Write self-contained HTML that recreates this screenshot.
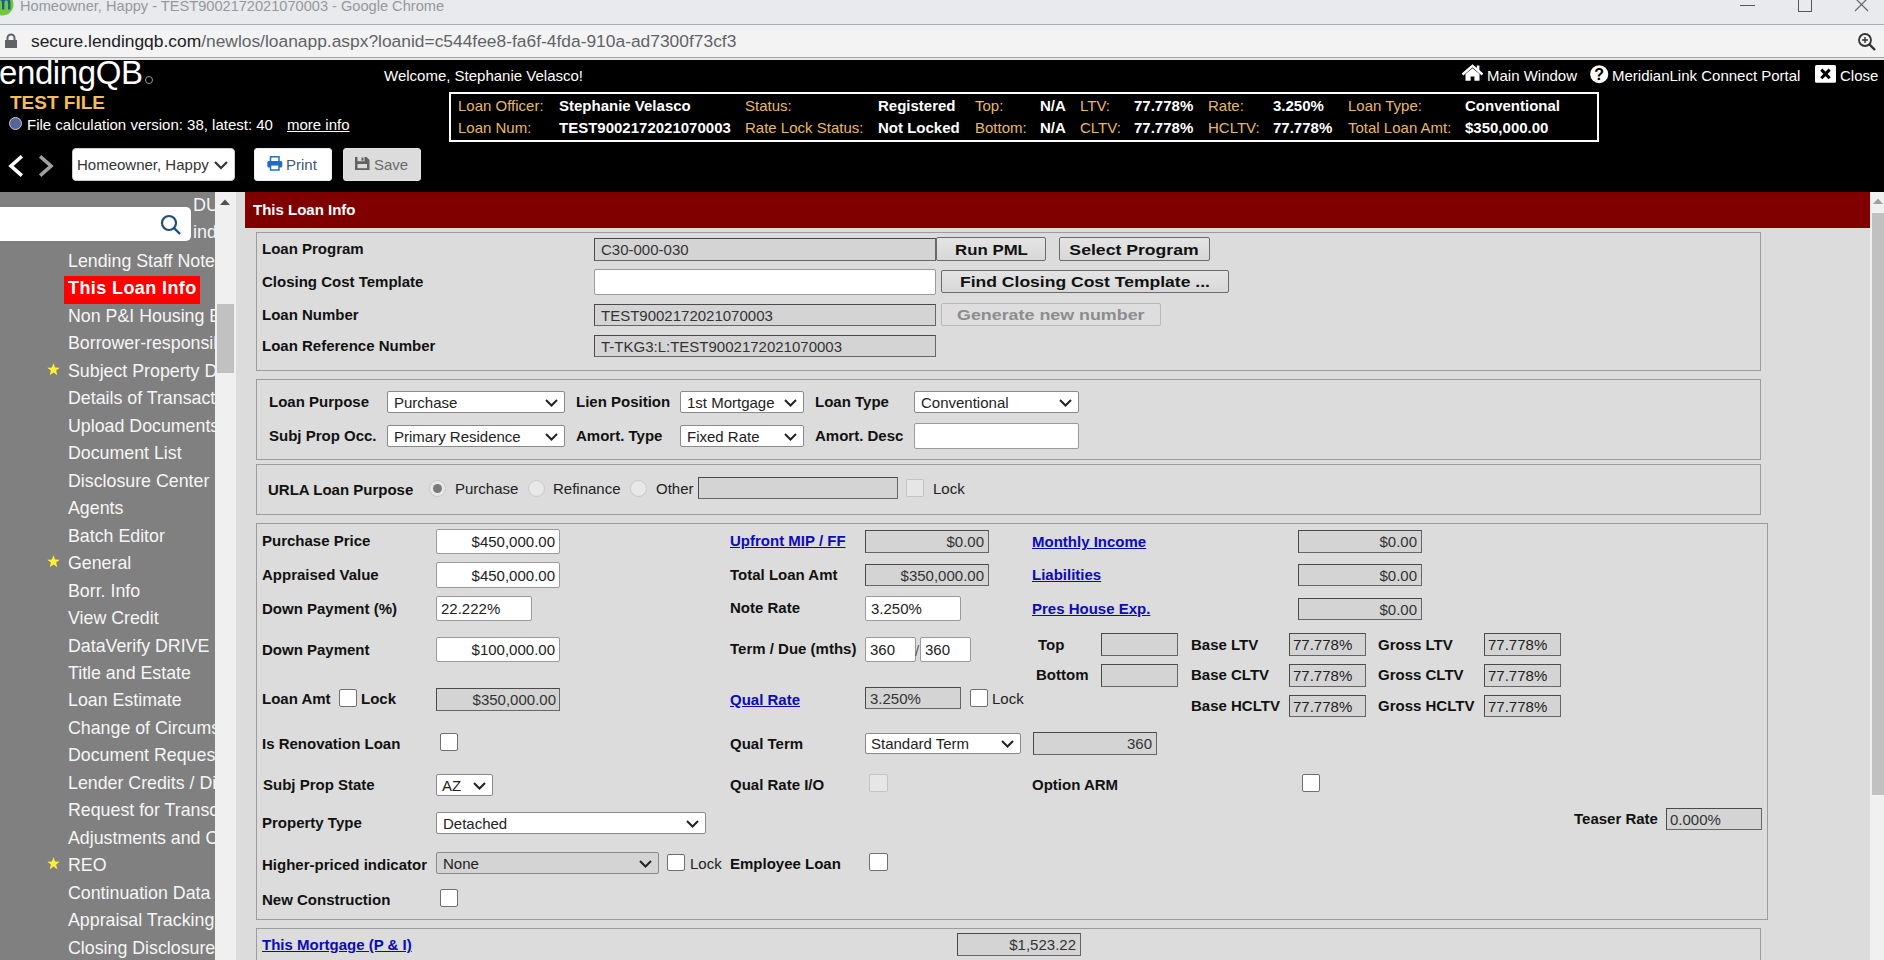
<!DOCTYPE html><html><head><meta charset="utf-8"><style>html,body{margin:0;padding:0;}body{width:1884px;height:960px;overflow:hidden;position:relative;background:#dcdcdc;font-family:"Liberation Sans", sans-serif;}.t{position:absolute;white-space:nowrap;}.b{position:absolute;box-sizing:border-box;}</style></head><body>
<div class="b" style="left:0px;top:0px;width:1884px;height:24px;background:#e8eaed;"></div>
<div class="b" style="left:0px;top:24px;width:1884px;height:1px;background:#a9acaf;"></div>
<div class="b" style="left:0px;top:25px;width:1884px;height:6px;background:#eef1f3;"></div>
<div class="b" style="left:0px;top:31px;width:1884px;height:26px;background:#f3f3f3;"></div>
<div class="b" style="left:0px;top:57px;width:1884px;height:1px;background:#a4a4a4;"></div>
<div class="b" style="left:0px;top:58px;width:1884px;height:2px;background:#e6e6e6;"></div>
<svg class="b" style="left:0;top:0" width="16" height="18"><circle cx="2.5" cy="4.5" r="11" fill="#72c83c"/><path d="M-2.5 10 V3 Q-2.5 -1 0.5 -1 Q3.2 -1 3.2 3 V9.5 M3.2 3 Q3.2 -1 6.3 -1 Q9.3 -1 9.3 3 V9.5" fill="none" stroke="#1d5c9a" stroke-width="2.4"/></svg>
<div class="t" style="left:20px;top:-1.26px;font-size:14.6px;line-height:14.6px;color:#96989b;">Homeowner, Happy - TEST9002172021070003 - Google Chrome</div>
<div class="b" style="left:1740px;top:5px;width:15px;height:1px;background:#555;"></div>
<div class="b" style="left:1798px;top:-2px;width:14px;height:14px;border:1px solid #555;"></div>
<svg class="b" style="left:1853px;top:-3px" width="18" height="17"><path d="M2 1 L15 14 M15 1 L2 14" stroke="#666" stroke-width="1.2"/></svg>
<svg class="b" style="left:4px;top:33px" width="14" height="16"><path d="M3.5 7 V5 a3.5 3.5 0 0 1 7 0 V7" fill="none" stroke="#5f6368" stroke-width="2"/><rect x="1" y="7" width="12" height="8" fill="#5f6368"/></svg>
<div class="t" style="left:31px;top:33.47px;font-size:17.4px;line-height:17.4px;color:#5f6368;"><span style="color:#202124">secure.lendingqb.com</span>/newlos/loanapp.aspx?loanid=c544fee8-fa6f-4fda-910a-ad7300f73cf3</div>
<svg class="b" style="left:1856px;top:31px" width="22" height="22"><circle cx="9" cy="9" r="6" fill="none" stroke="#333" stroke-width="1.8"/><path d="M9 6 V12 M6 9 H12" stroke="#333" stroke-width="1.4"/><path d="M13.5 13.5 L19 19" stroke="#333" stroke-width="2.4"/></svg>
<div class="b" style="left:0px;top:60px;width:1884px;height:132px;background:#000;"></div>
<div class="t" style="left:-1px;top:56.07px;font-size:33px;line-height:33px;color:#fff;letter-spacing:-0.4px;">endingQB</div>
<div class="b" style="left:145px;top:76px;width:8px;height:8px;border-radius:50%;border:1px solid #999;"></div>
<div class="t" style="left:10px;top:92.92px;font-size:19px;line-height:19px;color:#f3bd5c;font-weight:bold;">TEST FILE</div>
<div class="b" style="left:9px;top:117px;width:13px;height:13px;border-radius:50%;background:#56659a;border:1px solid #ccc;"></div>
<div class="t" style="left:27px;top:117.30px;font-size:15px;line-height:15px;color:#fff;">File calculation version: 38, latest: 40</div>
<div class="t" style="left:287px;top:117.30px;font-size:15px;line-height:15px;color:#fff;text-decoration:underline;">more info</div>
<div class="t" style="left:384px;top:68.30px;font-size:15px;line-height:15px;color:#fff;">Welcome, Stephanie Velasco!</div>
<svg class="b" style="left:1461px;top:64px" width="24" height="18"><path d="M1.5 10.5 L11.5 1.8 L21.5 10.5" fill="none" stroke="#fff" stroke-width="2.4"/><path d="M4.5 10 V16.8 H9.6 V12.6 H13.4 V16.8 H18.5 V10 L11.5 4.2 Z" fill="#fff"/><rect x="15.8" y="1.5" width="2.6" height="5.5" fill="#fff"/></svg>
<div class="t" style="left:1487px;top:68.30px;font-size:15px;line-height:15px;color:#fff;">Main Window</div>
<svg class="b" style="left:1590px;top:64.5px" width="19" height="19"><circle cx="9.2" cy="9.2" r="9" fill="#fff"/><text x="9.2" y="15" text-anchor="middle" font-family="Liberation Sans" font-weight="bold" font-size="16" fill="#000">?</text></svg>
<div class="t" style="left:1612px;top:68.30px;font-size:15px;line-height:15px;color:#fff;">MeridianLink Connect Portal</div>
<svg class="b" style="left:1815px;top:65px" width="22" height="18"><rect x="0" y="0" width="21" height="17.8" rx="1.5" fill="#fff"/><path d="M6.3 4.6 L14.7 13.2 M14.7 4.6 L6.3 13.2" stroke="#000" stroke-width="3"/></svg>
<div class="t" style="left:1840px;top:68.30px;font-size:15px;line-height:15px;color:#fff;">Close</div>
<div class="b" style="left:449px;top:92px;width:1150px;height:50px;border:2px solid #fff;"></div>
<div class="t" style="left:458px;top:98.30px;font-size:15px;line-height:15px;color:#e6b96a;">Loan Officer:</div>
<div class="t" style="left:458px;top:120.30px;font-size:15px;line-height:15px;color:#e6b96a;">Loan Num:</div>
<div class="t" style="left:745px;top:98.30px;font-size:15px;line-height:15px;color:#e6b96a;">Status:</div>
<div class="t" style="left:745px;top:120.30px;font-size:15px;line-height:15px;color:#e6b96a;">Rate Lock Status:</div>
<div class="t" style="left:975px;top:98.30px;font-size:15px;line-height:15px;color:#e6b96a;">Top:</div>
<div class="t" style="left:975px;top:120.30px;font-size:15px;line-height:15px;color:#e6b96a;">Bottom:</div>
<div class="t" style="left:1080px;top:98.30px;font-size:15px;line-height:15px;color:#e6b96a;">LTV:</div>
<div class="t" style="left:1080px;top:120.30px;font-size:15px;line-height:15px;color:#e6b96a;">CLTV:</div>
<div class="t" style="left:1208px;top:98.30px;font-size:15px;line-height:15px;color:#e6b96a;">Rate:</div>
<div class="t" style="left:1208px;top:120.30px;font-size:15px;line-height:15px;color:#e6b96a;">HCLTV:</div>
<div class="t" style="left:1348px;top:98.30px;font-size:15px;line-height:15px;color:#e6b96a;">Loan Type:</div>
<div class="t" style="left:1348px;top:120.30px;font-size:15px;line-height:15px;color:#e6b96a;">Total Loan Amt:</div>
<div class="t" style="left:559px;top:98.30px;font-size:15px;line-height:15px;color:#fff;font-weight:bold;">Stephanie Velasco</div>
<div class="t" style="left:559px;top:120.30px;font-size:15px;line-height:15px;color:#fff;font-weight:bold;">TEST9002172021070003</div>
<div class="t" style="left:878px;top:98.30px;font-size:15px;line-height:15px;color:#fff;font-weight:bold;">Registered</div>
<div class="t" style="left:878px;top:120.30px;font-size:15px;line-height:15px;color:#fff;font-weight:bold;">Not Locked</div>
<div class="t" style="left:1040px;top:98.30px;font-size:15px;line-height:15px;color:#fff;font-weight:bold;">N/A</div>
<div class="t" style="left:1040px;top:120.30px;font-size:15px;line-height:15px;color:#fff;font-weight:bold;">N/A</div>
<div class="t" style="left:1134px;top:98.30px;font-size:15px;line-height:15px;color:#fff;font-weight:bold;">77.778%</div>
<div class="t" style="left:1134px;top:120.30px;font-size:15px;line-height:15px;color:#fff;font-weight:bold;">77.778%</div>
<div class="t" style="left:1273px;top:98.30px;font-size:15px;line-height:15px;color:#fff;font-weight:bold;">3.250%</div>
<div class="t" style="left:1273px;top:120.30px;font-size:15px;line-height:15px;color:#fff;font-weight:bold;">77.778%</div>
<div class="t" style="left:1465px;top:98.30px;font-size:15px;line-height:15px;color:#fff;font-weight:bold;">Conventional</div>
<div class="t" style="left:1465px;top:120.30px;font-size:15px;line-height:15px;color:#fff;font-weight:bold;">$350,000.00</div>
<svg class="b" style="left:0px;top:150px" width="30" height="30"><path d="M20.5 7.5 L11 16 L20.5 24.5" fill="none" stroke="#fff" stroke-width="3.6" stroke-linecap="square"/></svg>
<svg class="b" style="left:30px;top:150px" width="30" height="30"><path d="M11.5 7.5 L21 16 L11.5 24.5" fill="none" stroke="#a0a0a0" stroke-width="3.6" stroke-linecap="square"/></svg>
<div class="b" style="left:72px;top:148px;width:163px;height:33px;background:#fff;border-radius:4px;border:1px solid #ccc;"></div>
<div class="t" style="left:77px;top:157.30px;font-size:15px;line-height:15px;color:#333;">Homeowner, Happy</div>
<svg class="b" style="left:213.0px;top:159.5px" width="16" height="10.0"><path d="M2 2 L8.0 8.0 L14 2" fill="none" stroke="#333" stroke-width="2.2"/></svg>
<div class="b" style="left:254px;top:148px;width:78px;height:33px;background:#fff;border-radius:3px;border:1px solid #e6eef8;"></div>
<svg class="b" style="left:267px;top:156px" width="16" height="15"><rect x="3.5" y="0.8" width="8.5" height="5" fill="#fff" stroke="#1f6fc0" stroke-width="1.5"/><rect x="0.3" y="5" width="15" height="6.5" rx="1.5" fill="#1f6fc0"/><rect x="3.5" y="8.8" width="8.5" height="5.2" fill="#fff" stroke="#1f6fc0" stroke-width="1.5"/></svg>
<div class="t" style="left:286px;top:157.30px;font-size:15px;line-height:15px;color:#3f5877;">Print</div>
<div class="b" style="left:343px;top:148px;width:78px;height:33px;background:#dcdcdc;border-radius:3px;border:1px solid #e2e2e2;"></div>
<svg class="b" style="left:355px;top:157px" width="15" height="13"><path d="M0 0 H11.5 L14.5 3 V13 H0 Z" fill="#626262"/><rect x="2.5" y="0" width="7" height="4.2" fill="#dcdcdc"/><rect x="6.5" y="0.6" width="2" height="3" fill="#626262"/><rect x="2.5" y="7" width="9.5" height="4.2" fill="#dcdcdc"/></svg>
<div class="t" style="left:374px;top:157.30px;font-size:15px;line-height:15px;color:#6a6a6a;">Save</div>
<div class="b" style="left:0px;top:192px;width:215px;height:768px;background:#808080;overflow:hidden;"></div>
<div class="b" style="left:-10px;top:207px;width:201px;height:34px;background:#fff;border-radius:5px;"></div>
<svg class="b" style="left:159px;top:213px" width="24" height="24"><circle cx="10" cy="10" r="7" fill="none" stroke="#1e4f7a" stroke-width="2.2"/><path d="M15 15 L21 21" stroke="#1e4f7a" stroke-width="2.4"/></svg>
<div class="b" style="left:193px;top:192px;width:22px;height:50px;overflow:hidden;"><div class="t" style="left:0;top:4.26px;font-size:18px;line-height:18px;color:#f4f4f4">DU</div><div class="t" style="left:0;top:30.76px;font-size:18px;line-height:18px;color:#f4f4f4">ind</div></div>
<div class="b" style="left:0;top:192px;width:215px;height:768px;overflow:hidden;">
<div class="t" style="left:68px;top:60.93px;font-size:17.8px;line-height:17.8px;color:#f6f6f6;">Lending Staff Notes</div>
<div class="b" style="left:64px;top:84px;width:136px;height:28px;background:#f00;"></div>
<div class="t" style="left:68px;top:87.16px;font-size:18px;line-height:18px;color:#fff;font-weight:bold;letter-spacing:0.4px;">This Loan Info</div>
<div class="t" style="left:68px;top:115.87px;font-size:17.8px;line-height:17.8px;color:#f6f6f6;">Non P&amp;I Housing Expenses</div>
<div class="t" style="left:68px;top:143.34px;font-size:17.8px;line-height:17.8px;color:#f6f6f6;">Borrower-responsible</div>
<div class="t" style="left:68px;top:170.81px;font-size:17.8px;line-height:17.8px;color:#f6f6f6;">Subject Property Details</div>
<svg class="b" style="left:46.5px;top:170.88px" width="13" height="13"><path d="M6.5 0.3 L8.1 4.6 L12.7 4.8 L9.1 7.6 L10.3 12.2 L6.5 9.6 L2.7 12.2 L3.9 7.6 L0.3 4.8 L4.9 4.6 Z" fill="#ffef3a"/></svg>
<div class="t" style="left:68px;top:198.28px;font-size:17.8px;line-height:17.8px;color:#f6f6f6;">Details of Transaction</div>
<div class="t" style="left:68px;top:225.75px;font-size:17.8px;line-height:17.8px;color:#f6f6f6;">Upload Documents</div>
<div class="t" style="left:68px;top:253.22px;font-size:17.8px;line-height:17.8px;color:#f6f6f6;">Document List</div>
<div class="t" style="left:68px;top:280.69px;font-size:17.8px;line-height:17.8px;color:#f6f6f6;">Disclosure Center</div>
<div class="t" style="left:68px;top:308.16px;font-size:17.8px;line-height:17.8px;color:#f6f6f6;">Agents</div>
<div class="t" style="left:68px;top:335.63px;font-size:17.8px;line-height:17.8px;color:#f6f6f6;">Batch Editor</div>
<div class="t" style="left:68px;top:363.10px;font-size:17.8px;line-height:17.8px;color:#f6f6f6;">General</div>
<svg class="b" style="left:46.5px;top:363.16999999999996px" width="13" height="13"><path d="M6.5 0.3 L8.1 4.6 L12.7 4.8 L9.1 7.6 L10.3 12.2 L6.5 9.6 L2.7 12.2 L3.9 7.6 L0.3 4.8 L4.9 4.6 Z" fill="#ffef3a"/></svg>
<div class="t" style="left:68px;top:390.57px;font-size:17.8px;line-height:17.8px;color:#f6f6f6;">Borr. Info</div>
<div class="t" style="left:68px;top:418.04px;font-size:17.8px;line-height:17.8px;color:#f6f6f6;">View Credit</div>
<div class="t" style="left:68px;top:445.51px;font-size:17.8px;line-height:17.8px;color:#f6f6f6;">DataVerify DRIVE</div>
<div class="t" style="left:68px;top:472.98px;font-size:17.8px;line-height:17.8px;color:#f6f6f6;">Title and Estate</div>
<div class="t" style="left:68px;top:500.45px;font-size:17.8px;line-height:17.8px;color:#f6f6f6;">Loan Estimate</div>
<div class="t" style="left:68px;top:527.92px;font-size:17.8px;line-height:17.8px;color:#f6f6f6;">Change of Circumstances</div>
<div class="t" style="left:68px;top:555.39px;font-size:17.8px;line-height:17.8px;color:#f6f6f6;">Document Request</div>
<div class="t" style="left:68px;top:582.86px;font-size:17.8px;line-height:17.8px;color:#f6f6f6;">Lender Credits / Discount</div>
<div class="t" style="left:68px;top:610.33px;font-size:17.8px;line-height:17.8px;color:#f6f6f6;">Request for Transcript</div>
<div class="t" style="left:68px;top:637.80px;font-size:17.8px;line-height:17.8px;color:#f6f6f6;">Adjustments and Other Credits</div>
<div class="t" style="left:68px;top:665.27px;font-size:17.8px;line-height:17.8px;color:#f6f6f6;">REO</div>
<svg class="b" style="left:46.5px;top:665.3399999999999px" width="13" height="13"><path d="M6.5 0.3 L8.1 4.6 L12.7 4.8 L9.1 7.6 L10.3 12.2 L6.5 9.6 L2.7 12.2 L3.9 7.6 L0.3 4.8 L4.9 4.6 Z" fill="#ffef3a"/></svg>
<div class="t" style="left:68px;top:692.74px;font-size:17.8px;line-height:17.8px;color:#f6f6f6;">Continuation Data</div>
<div class="t" style="left:68px;top:720.21px;font-size:17.8px;line-height:17.8px;color:#f6f6f6;">Appraisal Tracking</div>
<div class="t" style="left:68px;top:747.68px;font-size:17.8px;line-height:17.8px;color:#f6f6f6;">Closing Disclosure</div>
</div>
<div class="b" style="left:215px;top:192px;width:21px;height:768px;background:#f0f0f0;"></div>
<svg class="b" style="left:219px;top:198px" width="12" height="8"><path d="M1 7 L6 1.5 L11 7 Z" fill="#505050"/></svg>
<div class="b" style="left:217px;top:304px;width:17px;height:69px;background:#c1c1c1;"></div>
<div class="b" style="left:245px;top:192px;width:1625px;height:36px;background:#800000;"></div>
<div class="t" style="left:253px;top:202.30px;font-size:15px;line-height:15px;color:#fff;font-weight:bold;">This Loan Info</div>
<div class="b" style="left:1870px;top:192px;width:14px;height:768px;background:#f0f0f0;"></div>
<svg class="b" style="left:1872px;top:197px" width="12" height="8"><path d="M1 7 L6 1.5 L11 7 Z" fill="#a0a0a0"/></svg>
<div class="b" style="left:1872px;top:213px;width:12px;height:582px;background:#c1c1c1;"></div>
<div class="b" style="left:256px;top:232px;width:1505px;height:139px;border:1px solid #9c9c9c;"></div>
<div class="b" style="left:256px;top:379px;width:1505px;height:81px;border:1px solid #9c9c9c;"></div>
<div class="b" style="left:256px;top:464px;width:1505px;height:51px;border:1px solid #9c9c9c;"></div>
<div class="b" style="left:256px;top:523px;width:1512px;height:397px;border:1px solid #9c9c9c;"></div>
<div class="b" style="left:256px;top:928px;width:1505px;height:72px;border:1px solid #9c9c9c;"></div>
<div class="t" style="left:262px;top:241.30px;font-size:15px;line-height:15px;color:#111;font-weight:bold;">Loan Program</div>
<div class="t" style="left:262px;top:274.30px;font-size:15px;line-height:15px;color:#111;font-weight:bold;">Closing Cost Template</div>
<div class="t" style="left:262px;top:307.30px;font-size:15px;line-height:15px;color:#111;font-weight:bold;">Loan Number</div>
<div class="t" style="left:262px;top:338.30px;font-size:15px;line-height:15px;color:#111;font-weight:bold;">Loan Reference Number</div>
<div class="b" style="left:594px;top:238px;width:342px;height:23px;background:#d4d4d4;border:1px solid #666;border-top-color:#4a4a4a;border-left-color:#4a4a4a;"></div>
<div class="t" style="left:601px;top:242.20px;font-size:15px;line-height:15px;color:#333;">C30-000-030</div>
<div class="b" style="left:594px;top:269px;width:342px;height:26px;background:#fff;border:1px solid #9a9a9a;border-radius:2px;"></div>
<div class="b" style="left:594px;top:304px;width:342px;height:22px;background:#d4d4d4;border:1px solid #666;border-top-color:#4a4a4a;border-left-color:#4a4a4a;"></div>
<div class="t" style="left:601px;top:307.70px;font-size:15px;line-height:15px;color:#333;">TEST9002172021070003</div>
<div class="b" style="left:594px;top:335px;width:342px;height:22px;background:#d4d4d4;border:1px solid #666;border-top-color:#4a4a4a;border-left-color:#4a4a4a;"></div>
<div class="t" style="left:601px;top:338.70px;font-size:15px;line-height:15px;color:#333;">T-TKG3:L:TEST9002172021070003</div>
<div class="b" style="left:936px;top:237px;width:110px;height:24px;background:linear-gradient(#e4e4e4,#d8d8d8);border:1px solid #6a6a6a;border-radius:2px;"></div>
<div class="t" style="left:936px;width:110px;text-align:center;top:241.70px;font-size:15px;line-height:15px;font-weight:bold;color:#111;"><span style="display:inline-block;transform:scaleX(1.12);">Run PML</span></div>
<div class="b" style="left:1059px;top:237px;width:151px;height:24px;background:linear-gradient(#e4e4e4,#d8d8d8);border:1px solid #6a6a6a;border-radius:2px;"></div>
<div class="t" style="left:1059px;width:151px;text-align:center;top:241.70px;font-size:15px;line-height:15px;font-weight:bold;color:#111;"><span style="display:inline-block;transform:scaleX(1.175);">Select Program</span></div>
<div class="b" style="left:941px;top:270px;width:288px;height:23px;background:linear-gradient(#e4e4e4,#d8d8d8);border:1px solid #6a6a6a;border-radius:2px;"></div>
<div class="t" style="left:941px;width:288px;text-align:center;top:274.20px;font-size:15px;line-height:15px;font-weight:bold;color:#111;"><span style="display:inline-block;transform:scaleX(1.168);">Find Closing Cost Template ...</span></div>
<div class="b" style="left:941px;top:303px;width:220px;height:23px;background:#dedede;border:1px solid #b8b8b8;border-radius:2px;"></div>
<div class="t" style="left:941px;width:220px;text-align:center;top:307.20px;font-size:15px;line-height:15px;font-weight:bold;color:#8c8c8c;"><span style="display:inline-block;transform:scaleX(1.19);">Generate new number</span></div>
<div class="t" style="left:269px;top:394.30px;font-size:15px;line-height:15px;color:#111;font-weight:bold;">Loan Purpose</div>
<div class="t" style="left:269px;top:428.30px;font-size:15px;line-height:15px;color:#111;font-weight:bold;">Subj Prop Occ.</div>
<div class="b" style="left:387px;top:391px;width:178px;height:22px;background:#fff;border:1px solid #8a8a8a;border-radius:2px;"></div>
<div class="t" style="left:394px;top:394.70px;font-size:15px;line-height:15px;color:#222;">Purchase</div>
<svg class="b" style="left:543.5px;top:397.75px" width="15" height="9.5"><path d="M2 2 L7.5 7.5 L13 2" fill="none" stroke="#222" stroke-width="2"/></svg>
<div class="b" style="left:387px;top:425px;width:178px;height:22px;background:#fff;border:1px solid #8a8a8a;border-radius:2px;"></div>
<div class="t" style="left:394px;top:428.70px;font-size:15px;line-height:15px;color:#222;">Primary Residence</div>
<svg class="b" style="left:543.5px;top:431.75px" width="15" height="9.5"><path d="M2 2 L7.5 7.5 L13 2" fill="none" stroke="#222" stroke-width="2"/></svg>
<div class="t" style="left:576px;top:394.30px;font-size:15px;line-height:15px;color:#111;font-weight:bold;">Lien Position</div>
<div class="t" style="left:576px;top:428.30px;font-size:15px;line-height:15px;color:#111;font-weight:bold;">Amort. Type</div>
<div class="b" style="left:680px;top:391px;width:124px;height:22px;background:#fff;border:1px solid #8a8a8a;border-radius:2px;"></div>
<div class="t" style="left:687px;top:394.70px;font-size:15px;line-height:15px;color:#222;">1st Mortgage</div>
<svg class="b" style="left:782.5px;top:397.75px" width="15" height="9.5"><path d="M2 2 L7.5 7.5 L13 2" fill="none" stroke="#222" stroke-width="2"/></svg>
<div class="b" style="left:680px;top:425px;width:124px;height:22px;background:#fff;border:1px solid #8a8a8a;border-radius:2px;"></div>
<div class="t" style="left:687px;top:428.70px;font-size:15px;line-height:15px;color:#222;">Fixed Rate</div>
<svg class="b" style="left:782.5px;top:431.75px" width="15" height="9.5"><path d="M2 2 L7.5 7.5 L13 2" fill="none" stroke="#222" stroke-width="2"/></svg>
<div class="t" style="left:815px;top:394.30px;font-size:15px;line-height:15px;color:#111;font-weight:bold;">Loan Type</div>
<div class="t" style="left:815px;top:428.30px;font-size:15px;line-height:15px;color:#111;font-weight:bold;">Amort. Desc</div>
<div class="b" style="left:914px;top:391px;width:165px;height:22px;background:#fff;border:1px solid #8a8a8a;border-radius:2px;"></div>
<div class="t" style="left:921px;top:394.70px;font-size:15px;line-height:15px;color:#222;">Conventional</div>
<svg class="b" style="left:1057.5px;top:397.75px" width="15" height="9.5"><path d="M2 2 L7.5 7.5 L13 2" fill="none" stroke="#222" stroke-width="2"/></svg>
<div class="b" style="left:914px;top:423px;width:165px;height:26px;background:#fff;border:1px solid #9a9a9a;border-radius:2px;"></div>
<div class="t" style="left:268px;top:482.30px;font-size:15px;line-height:15px;color:#111;font-weight:bold;">URLA Loan Purpose</div>
<div class="b" style="left:428.5px;top:479.5px;width:17.0px;height:17.0px;border-radius:50%;background:#e8e8e8;border:1px solid #c8c8c8;"></div>
<div class="b" style="left:432.5px;top:483.5px;width:9px;height:9px;border-radius:50%;background:#7a7a7a;"></div>
<div class="t" style="left:455px;top:481.30px;font-size:15px;line-height:15px;color:#222;">Purchase</div>
<div class="b" style="left:527.5px;top:479.5px;width:17.0px;height:17.0px;border-radius:50%;background:#e8e8e8;border:1px solid #c8c8c8;"></div>
<div class="t" style="left:553px;top:481.30px;font-size:15px;line-height:15px;color:#222;">Refinance</div>
<div class="b" style="left:629.5px;top:479.5px;width:17.0px;height:17.0px;border-radius:50%;background:#e8e8e8;border:1px solid #c8c8c8;"></div>
<div class="t" style="left:656px;top:481.30px;font-size:15px;line-height:15px;color:#222;">Other</div>
<div class="b" style="left:698px;top:477px;width:200px;height:22px;background:#d4d4d4;border:1px solid #666;border-top-color:#4a4a4a;border-left-color:#4a4a4a;"></div>
<div class="b" style="left:906px;top:479px;width:18px;height:18px;background:#e6e6e6;border:1px solid #c4c4c4;border-radius:2px;"></div>
<div class="t" style="left:933px;top:481.30px;font-size:15px;line-height:15px;color:#222;">Lock</div>
<div class="t" style="left:262px;top:533.30px;font-size:15px;line-height:15px;color:#111;font-weight:bold;">Purchase Price</div>
<div class="t" style="left:262px;top:567.30px;font-size:15px;line-height:15px;color:#111;font-weight:bold;">Appraised Value</div>
<div class="t" style="left:262px;top:601.30px;font-size:15px;line-height:15px;color:#111;font-weight:bold;">Down Payment (%)</div>
<div class="t" style="left:262px;top:642.30px;font-size:15px;line-height:15px;color:#111;font-weight:bold;">Down Payment</div>
<div class="t" style="left:262px;top:691.30px;font-size:15px;line-height:15px;color:#111;font-weight:bold;">Loan Amt</div>
<div class="b" style="left:339px;top:689px;width:18px;height:18px;background:#fff;border:1px solid #6f6f6f;border-radius:2px;"></div>
<div class="t" style="left:361px;top:691.30px;font-size:15px;line-height:15px;color:#111;font-weight:bold;">Lock</div>
<div class="t" style="left:262px;top:736.30px;font-size:15px;line-height:15px;color:#111;font-weight:bold;">Is Renovation Loan</div>
<div class="b" style="left:440px;top:733px;width:18px;height:18px;background:#fff;border:1px solid #6f6f6f;border-radius:2px;"></div>
<div class="t" style="left:263px;top:777.30px;font-size:15px;line-height:15px;color:#111;font-weight:bold;">Subj Prop State</div>
<div class="t" style="left:262px;top:815.30px;font-size:15px;line-height:15px;color:#111;font-weight:bold;">Property Type</div>
<div class="t" style="left:262px;top:857.30px;font-size:15px;line-height:15px;color:#111;font-weight:bold;">Higher-priced indicator</div>
<div class="t" style="left:262px;top:892.30px;font-size:15px;line-height:15px;color:#111;font-weight:bold;">New Construction</div>
<div class="b" style="left:436px;top:529px;width:124px;height:25px;background:#fff;border:1px solid #9a9a9a;border-radius:2px;"></div>
<div class="t" style="right:1329px;top:534.20px;font-size:15px;line-height:15px;color:#222;">$450,000.00</div>
<div class="b" style="left:436px;top:562px;width:124px;height:26px;background:#fff;border:1px solid #9a9a9a;border-radius:2px;"></div>
<div class="t" style="right:1329px;top:567.70px;font-size:15px;line-height:15px;color:#222;">$450,000.00</div>
<div class="b" style="left:436px;top:596px;width:96px;height:25px;background:#fff;border:1px solid #9a9a9a;border-radius:2px;"></div>
<div class="t" style="left:441px;top:601.20px;font-size:15px;line-height:15px;color:#222;">22.222%</div>
<div class="b" style="left:436px;top:637px;width:124px;height:25px;background:#fff;border:1px solid #9a9a9a;border-radius:2px;"></div>
<div class="t" style="right:1329px;top:642.20px;font-size:15px;line-height:15px;color:#222;">$100,000.00</div>
<div class="b" style="left:436px;top:688px;width:124px;height:23px;background:#d4d4d4;border:1px solid #666;border-top-color:#4a4a4a;border-left-color:#4a4a4a;"></div>
<div class="t" style="right:1328px;top:692.20px;font-size:15px;line-height:15px;color:#333;">$350,000.00</div>
<div class="b" style="left:436px;top:774px;width:57px;height:22px;background:#fff;border:1px solid #8a8a8a;border-radius:2px;"></div>
<div class="t" style="left:442px;top:777.70px;font-size:15px;line-height:15px;color:#222;">AZ</div>
<svg class="b" style="left:471.5px;top:780.75px" width="15" height="9.5"><path d="M2 2 L7.5 7.5 L13 2" fill="none" stroke="#222" stroke-width="2"/></svg>
<div class="b" style="left:436px;top:812px;width:270px;height:22px;background:#fff;border:1px solid #8a8a8a;border-radius:2px;"></div>
<div class="t" style="left:443px;top:815.70px;font-size:15px;line-height:15px;color:#222;">Detached</div>
<svg class="b" style="left:684.5px;top:818.75px" width="15" height="9.5"><path d="M2 2 L7.5 7.5 L13 2" fill="none" stroke="#222" stroke-width="2"/></svg>
<div class="b" style="left:436px;top:852px;width:223px;height:22px;background:#d4d4d4;border:1px solid #8a8a8a;border-radius:2px;"></div>
<div class="t" style="left:443px;top:855.70px;font-size:15px;line-height:15px;color:#222;">None</div>
<svg class="b" style="left:637.5px;top:858.75px" width="15" height="9.5"><path d="M2 2 L7.5 7.5 L13 2" fill="none" stroke="#222" stroke-width="2"/></svg>
<div class="b" style="left:667px;top:854px;width:18px;height:17px;background:#fff;border:1px solid #6f6f6f;border-radius:2px;"></div>
<div class="t" style="left:690px;top:856.30px;font-size:15px;line-height:15px;color:#222;">Lock</div>
<div class="b" style="left:440px;top:889px;width:18px;height:18px;background:#fff;border:1px solid #6f6f6f;border-radius:2px;"></div>
<div class="t" style="left:730px;top:533.30px;font-size:15px;line-height:15px;color:#0b0bb8;font-weight:bold;text-decoration:underline;">Upfront MIP / FF</div>
<div class="t" style="left:730px;top:567.30px;font-size:15px;line-height:15px;color:#111;font-weight:bold;">Total Loan Amt</div>
<div class="t" style="left:730px;top:600.30px;font-size:15px;line-height:15px;color:#111;font-weight:bold;">Note Rate</div>
<div class="t" style="left:730px;top:641.30px;font-size:15px;line-height:15px;color:#111;font-weight:bold;">Term / Due (mths)</div>
<div class="t" style="left:730px;top:692.30px;font-size:15px;line-height:15px;color:#0b0bb8;font-weight:bold;text-decoration:underline;">Qual Rate</div>
<div class="t" style="left:730px;top:736.30px;font-size:15px;line-height:15px;color:#111;font-weight:bold;">Qual Term</div>
<div class="t" style="left:730px;top:777.30px;font-size:15px;line-height:15px;color:#111;font-weight:bold;">Qual Rate I/O</div>
<div class="t" style="left:730px;top:856.30px;font-size:15px;line-height:15px;color:#111;font-weight:bold;">Employee Loan</div>
<div class="b" style="left:865px;top:530px;width:124px;height:23px;background:#d4d4d4;border:1px solid #666;border-top-color:#4a4a4a;border-left-color:#4a4a4a;"></div>
<div class="t" style="right:900px;top:534.20px;font-size:15px;line-height:15px;color:#333;">$0.00</div>
<div class="b" style="left:865px;top:564px;width:124px;height:22px;background:#d4d4d4;border:1px solid #666;border-top-color:#4a4a4a;border-left-color:#4a4a4a;"></div>
<div class="t" style="right:900px;top:567.70px;font-size:15px;line-height:15px;color:#333;">$350,000.00</div>
<div class="b" style="left:865px;top:596px;width:96px;height:25px;background:#fff;border:1px solid #9a9a9a;border-radius:2px;"></div>
<div class="t" style="left:871px;top:601.20px;font-size:15px;line-height:15px;color:#222;">3.250%</div>
<div class="b" style="left:865px;top:637px;width:51px;height:25px;background:#fff;border:1px solid #9a9a9a;border-radius:2px;"></div>
<div class="t" style="left:870px;top:642.20px;font-size:15px;line-height:15px;color:#222;">360</div>
<div class="t" style="left:915px;top:643.30px;font-size:15px;line-height:15px;color:#555;">/</div>
<div class="b" style="left:920px;top:637px;width:51px;height:25px;background:#fff;border:1px solid #9a9a9a;border-radius:2px;"></div>
<div class="t" style="left:925px;top:642.20px;font-size:15px;line-height:15px;color:#222;">360</div>
<div class="b" style="left:865px;top:687px;width:96px;height:22px;background:#d4d4d4;border:1px solid #666;border-top-color:#4a4a4a;border-left-color:#4a4a4a;"></div>
<div class="t" style="left:870px;top:690.70px;font-size:15px;line-height:15px;color:#333;">3.250%</div>
<div class="b" style="left:970px;top:689px;width:18px;height:18px;background:#fff;border:1px solid #6f6f6f;border-radius:2px;"></div>
<div class="t" style="left:992px;top:691.30px;font-size:15px;line-height:15px;color:#222;">Lock</div>
<div class="b" style="left:865px;top:733px;width:156px;height:21px;background:#fff;border:1px solid #8a8a8a;border-radius:2px;"></div>
<div class="t" style="left:871px;top:736.20px;font-size:15px;line-height:15px;color:#222;">Standard Term</div>
<svg class="b" style="left:999.5px;top:739.25px" width="15" height="9.5"><path d="M2 2 L7.5 7.5 L13 2" fill="none" stroke="#222" stroke-width="2"/></svg>
<div class="b" style="left:869px;top:774px;width:19px;height:18px;background:#e6e6e6;border:1px solid #c4c4c4;border-radius:2px;"></div>
<div class="b" style="left:869px;top:853px;width:19px;height:18px;background:#fff;border:1px solid #6f6f6f;border-radius:2px;"></div>
<div class="t" style="left:1032px;top:534.30px;font-size:15px;line-height:15px;color:#0b0bb8;font-weight:bold;text-decoration:underline;">Monthly Income</div>
<div class="t" style="left:1032px;top:567.30px;font-size:15px;line-height:15px;color:#0b0bb8;font-weight:bold;text-decoration:underline;">Liabilities</div>
<div class="t" style="left:1032px;top:601.30px;font-size:15px;line-height:15px;color:#0b0bb8;font-weight:bold;text-decoration:underline;">Pres House Exp.</div>
<div class="b" style="left:1298px;top:530px;width:124px;height:23px;background:#d4d4d4;border:1px solid #666;border-top-color:#4a4a4a;border-left-color:#4a4a4a;"></div>
<div class="t" style="right:467px;top:534.20px;font-size:15px;line-height:15px;color:#333;">$0.00</div>
<div class="b" style="left:1298px;top:564px;width:124px;height:22px;background:#d4d4d4;border:1px solid #666;border-top-color:#4a4a4a;border-left-color:#4a4a4a;"></div>
<div class="t" style="right:467px;top:567.70px;font-size:15px;line-height:15px;color:#333;">$0.00</div>
<div class="b" style="left:1298px;top:598px;width:124px;height:22px;background:#d4d4d4;border:1px solid #666;border-top-color:#4a4a4a;border-left-color:#4a4a4a;"></div>
<div class="t" style="right:467px;top:601.70px;font-size:15px;line-height:15px;color:#333;">$0.00</div>
<div class="t" style="left:1038px;top:637.30px;font-size:15px;line-height:15px;color:#111;font-weight:bold;">Top</div>
<div class="t" style="left:1036px;top:667.30px;font-size:15px;line-height:15px;color:#111;font-weight:bold;">Bottom</div>
<div class="b" style="left:1101px;top:633px;width:77px;height:23px;background:#d4d4d4;border:1px solid #666;border-top-color:#4a4a4a;border-left-color:#4a4a4a;"></div>
<div class="b" style="left:1101px;top:664px;width:77px;height:23px;background:#d4d4d4;border:1px solid #666;border-top-color:#4a4a4a;border-left-color:#4a4a4a;"></div>
<div class="t" style="left:1191px;top:637.30px;font-size:15px;line-height:15px;color:#111;font-weight:bold;">Base LTV</div>
<div class="t" style="left:1191px;top:667.30px;font-size:15px;line-height:15px;color:#111;font-weight:bold;">Base CLTV</div>
<div class="t" style="left:1191px;top:698.30px;font-size:15px;line-height:15px;color:#111;font-weight:bold;">Base HCLTV</div>
<div class="t" style="left:1378px;top:637.30px;font-size:15px;line-height:15px;color:#111;font-weight:bold;">Gross LTV</div>
<div class="t" style="left:1378px;top:667.30px;font-size:15px;line-height:15px;color:#111;font-weight:bold;">Gross CLTV</div>
<div class="t" style="left:1378px;top:698.30px;font-size:15px;line-height:15px;color:#111;font-weight:bold;">Gross HCLTV</div>
<div class="b" style="left:1289px;top:633px;width:77px;height:23px;background:#d4d4d4;border:1px solid #666;border-top-color:#4a4a4a;border-left-color:#4a4a4a;"></div>
<div class="t" style="left:1293px;top:637.20px;font-size:15px;line-height:15px;color:#222;">77.778%</div>
<div class="b" style="left:1484px;top:633px;width:77px;height:23px;background:#d4d4d4;border:1px solid #666;border-top-color:#4a4a4a;border-left-color:#4a4a4a;"></div>
<div class="t" style="left:1488px;top:637.20px;font-size:15px;line-height:15px;color:#222;">77.778%</div>
<div class="b" style="left:1289px;top:664px;width:77px;height:23px;background:#d4d4d4;border:1px solid #666;border-top-color:#4a4a4a;border-left-color:#4a4a4a;"></div>
<div class="t" style="left:1293px;top:668.20px;font-size:15px;line-height:15px;color:#222;">77.778%</div>
<div class="b" style="left:1484px;top:664px;width:77px;height:23px;background:#d4d4d4;border:1px solid #666;border-top-color:#4a4a4a;border-left-color:#4a4a4a;"></div>
<div class="t" style="left:1488px;top:668.20px;font-size:15px;line-height:15px;color:#222;">77.778%</div>
<div class="b" style="left:1289px;top:695px;width:77px;height:22px;background:#d4d4d4;border:1px solid #666;border-top-color:#4a4a4a;border-left-color:#4a4a4a;"></div>
<div class="t" style="left:1293px;top:698.70px;font-size:15px;line-height:15px;color:#222;">77.778%</div>
<div class="b" style="left:1484px;top:695px;width:77px;height:22px;background:#d4d4d4;border:1px solid #666;border-top-color:#4a4a4a;border-left-color:#4a4a4a;"></div>
<div class="t" style="left:1488px;top:698.70px;font-size:15px;line-height:15px;color:#222;">77.778%</div>
<div class="b" style="left:1033px;top:732px;width:124px;height:23px;background:#d4d4d4;border:1px solid #666;border-top-color:#4a4a4a;border-left-color:#4a4a4a;"></div>
<div class="t" style="right:732px;top:736.20px;font-size:15px;line-height:15px;color:#333;">360</div>
<div class="t" style="left:1032px;top:777.30px;font-size:15px;line-height:15px;color:#111;font-weight:bold;">Option ARM</div>
<div class="b" style="left:1302px;top:774px;width:18px;height:18px;background:#fff;border:1px solid #6f6f6f;border-radius:2px;"></div>
<div class="t" style="left:1574px;top:811.30px;font-size:15px;line-height:15px;color:#111;font-weight:bold;">Teaser Rate</div>
<div class="b" style="left:1666px;top:808px;width:96px;height:22px;background:#d4d4d4;border:1px solid #666;border-top-color:#4a4a4a;border-left-color:#4a4a4a;"></div>
<div class="t" style="left:1670px;top:811.70px;font-size:15px;line-height:15px;color:#333;">0.000%</div>
<div class="t" style="left:262px;top:937.30px;font-size:15px;line-height:15px;color:#0b0bb8;font-weight:bold;text-decoration:underline;">This Mortgage (P &amp; I)</div>
<div class="b" style="left:957px;top:933px;width:124px;height:23px;background:#d4d4d4;border:1px solid #666;border-top-color:#4a4a4a;border-left-color:#4a4a4a;"></div>
<div class="t" style="right:808px;top:937.20px;font-size:15px;line-height:15px;color:#333;">$1,523.22</div>
</body></html>
